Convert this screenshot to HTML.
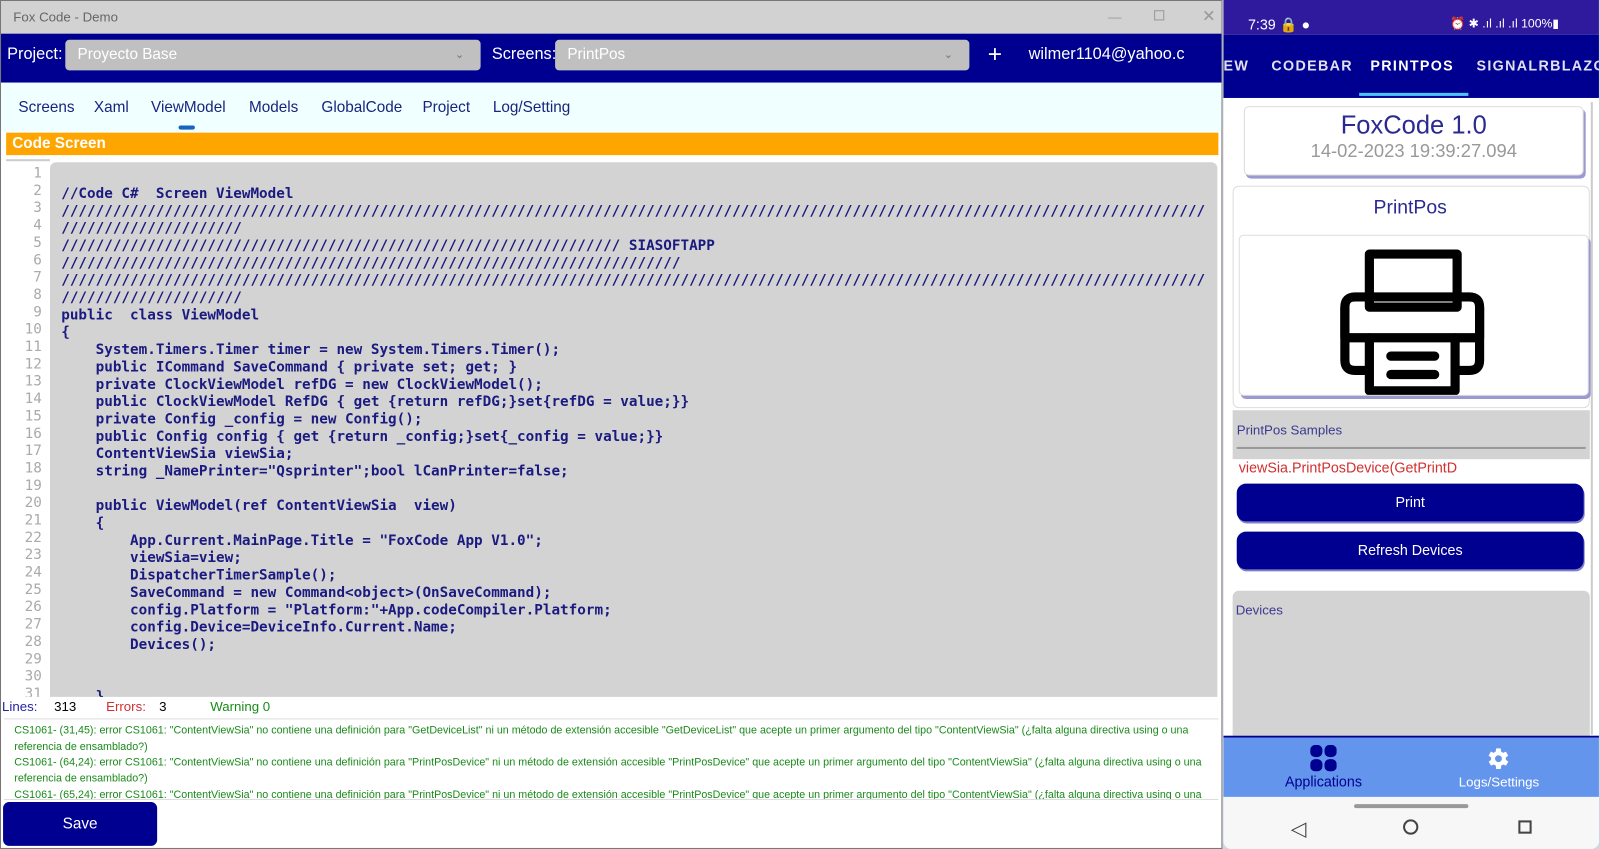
<!DOCTYPE html>
<html><head><meta charset="utf-8"><style>
*{box-sizing:border-box;margin:0;padding:0}
body{width:1600px;height:849px;overflow:hidden;background:#cfd6e0;font-family:"Liberation Sans","DejaVu Sans",sans-serif;position:relative}
#wrap{position:absolute;left:0;top:0;width:1568px;height:832px;transform:scale(1.0204);transform-origin:0 0}
.abs{position:absolute}
#win{left:0;top:0;width:1198px;height:832px;background:#fff;border:1px solid #777}
.title{left:0;top:0;width:1196px;height:32px;background:#d2d2d2;color:#666;font-size:13px;line-height:32px;padding-left:12px}
.nav{left:0;top:32px;width:1196px;height:48px;background:#000090;color:#fff;font-size:16px}
.sel{background:#c0c0c0;border-radius:4px;height:30px;top:6px;color:#fff;font-size:15px;line-height:30px;padding-left:12px}
.tabs{left:0;top:80px;width:1196px;height:48px;background:#f0ffff;font-size:15px;color:#1a237e}
.tabs span{position:absolute;top:16px}
.orange{left:5px;top:129px;width:1188px;height:22px;background:#ffa500;color:#fff;font-weight:bold;font-size:15px;line-height:22px;padding-left:6px}
.gut{left:5px;top:155px;width:43px;height:527px;border-top:2px solid #ccc;font-family:"DejaVu Sans Mono",monospace;font-size:14px;color:#aaa;text-align:right;padding-right:8px;line-height:17px;overflow:hidden;background:#fff}
.code{left:48px;top:158px;width:1144px;height:524px;background:#d3d3d3;border-radius:6px 6px 0 0;font-family:"DejaVu Sans Mono",monospace;font-size:14px;color:#1a1a80;line-height:17px;padding:6px 0 0 11px;white-space:pre;overflow:hidden;font-weight:bold}
.stat{top:684px;font-size:13px}
.err{left:3px;top:703px;width:1190px;height:80px;border-top:1px solid #ddd;border-bottom:1px solid #ddd;color:#1a8a1a;font-size:10.5px;line-height:15.7px;padding:4px 0 0 10px;overflow:hidden}
.save{left:2px;top:785px;width:151px;height:43px;background:#000090;border-radius:6px;color:#fff;font-size:15px;text-align:center;line-height:43px}
#ph{left:1199px;top:0;width:368px;height:832px;background:#fff;border-radius:0 0 8px 8px;overflow:hidden}
.card{background:#fff;border:1px solid #ddd;border-radius:5px;box-shadow:2px 3px 0 #9a9ad0}
.btn{left:13px;width:340px;height:37px;background:#000090;border-radius:9px;color:#fff;font-size:14px;text-align:center;line-height:37px;box-shadow:1px 2px 0 #8080c8}
</style></head><body><div id="wrap">
<div id="win" class="abs">
<div class="abs title">Fox Code - Demo<span class="abs" style="left:1085px;color:#999">—</span><span class="abs" style="left:1130px;top:9px;width:10px;height:10px;border:1px solid #999"></span><span class="abs" style="left:1177px;color:#999;font-size:16px">✕</span></div>
<div class="abs nav">
<span class="abs" style="left:6px;top:12px">Project:</span>
<div class="abs sel" style="left:63px;width:407px">Proyecto Base<span class="abs" style="right:16px;color:#777;font-size:11px">⌄</span></div>
<span class="abs" style="left:481px;top:12px">Screens:</span>
<div class="abs sel" style="left:543px;width:406px">PrintPos<span class="abs" style="right:16px;color:#777;font-size:11px">⌄</span></div>
<span class="abs" style="left:967px;top:7px;font-size:24px">+</span>
<span class="abs" style="left:1007px;top:12px">wilmer1104@yahoo.c</span>
</div>
<div class="abs tabs"><span style="left:17px">Screens</span><span style="left:91px">Xaml</span><span style="left:147px">ViewModel</span><span style="left:243px">Models</span><span style="left:314px">GlobalCode</span><span style="left:413px">Project</span><span style="left:482px">Log/Setting</span><div class="abs" style="left:174px;top:42px;width:16px;height:4px;border-radius:2px;background:#1565c0"></div></div>
<div class="abs orange">Code Screen</div>
<div class="abs gut" style="padding-top:4px">1<br>2<br>3<br>4<br>5<br>6<br>7<br>8<br>9<br>10<br>11<br>12<br>13<br>14<br>15<br>16<br>17<br>18<br>19<br>20<br>21<br>22<br>23<br>24<br>25<br>26<br>27<br>28<br>29<br>30<br>31</div>
<div class="abs code">
//Code C#  Screen ViewModel
/////////////////////////////////////////////////////////////////////////////////////////////////////////////////////////////////////
/////////////////////
///////////////////////////////////////////////////////////////// SIASOFTAPP
////////////////////////////////////////////////////////////////////////
/////////////////////////////////////////////////////////////////////////////////////////////////////////////////////////////////////
/////////////////////
public  class ViewModel
{
    System.Timers.Timer timer = new System.Timers.Timer();
    public ICommand SaveCommand { private set; get; }
    private ClockViewModel refDG = new ClockViewModel();
    public ClockViewModel RefDG { get {return refDG;}set{refDG = value;}}
    private Config _config = new Config();
    public Config config { get {return _config;}set{_config = value;}}
    ContentViewSia viewSia;
    string _NamePrinter="Qsprinter";bool lCanPrinter=false;

    public ViewModel(ref ContentViewSia  view)
    {
        App.Current.MainPage.Title = "FoxCode App V1.0";
        viewSia=view;
        DispatcherTimerSample();
        SaveCommand = new Command&lt;object&gt;(OnSaveCommand);
        config.Platform = "Platform:"+App.codeCompiler.Platform;
        config.Device=DeviceInfo.Current.Name;
        Devices();


    }
</div>
<span class="abs stat" style="left:1px;color:#2323a0">Lines:</span><span class="abs stat" style="left:52px">313</span>
<span class="abs stat" style="left:103px;color:#d03030">Errors:</span><span class="abs stat" style="left:155px">3</span>
<span class="abs stat" style="left:205px;color:#1a8a1a">Warning 0</span>
<div class="abs err">CS1061- (31,45): error CS1061: "ContentViewSia" no contiene una definición para "GetDeviceList" ni un método de extensión accesible "GetDeviceList" que acepte un primer argumento del tipo "ContentViewSia" (¿falta alguna directiva using o una referencia de ensamblado?)<br>CS1061- (64,24): error CS1061: "ContentViewSia" no contiene una definición para "PrintPosDevice" ni un método de extensión accesible "PrintPosDevice" que acepte un primer argumento del tipo "ContentViewSia" (¿falta alguna directiva using o una referencia de ensamblado?)<br>CS1061- (65,24): error CS1061: "ContentViewSia" no contiene una definición para "PrintPosDevice" ni un método de extensión accesible "PrintPosDevice" que acepte un primer argumento del tipo "ContentViewSia" (¿falta alguna directiva using o una referencia de ensamblado?)</div>
<div class="abs save">Save</div>
</div>
<div id="ph" class="abs">
<div class="abs" style="left:0;top:0;width:368px;height:34px;background:#2f1a9e;color:#fff;font-size:14px"><span class="abs" style="left:24px;top:16px">7:39 🔒 ●</span><span class="abs" style="left:222px;top:16px;font-size:12px">⏰ ✱ .ıl .ıl .ıl 100%▮</span></div>
<div class="abs" style="left:0;top:34px;width:368px;height:62px;background:#000090;color:#e0e0f0;font-size:14px;font-weight:bold;letter-spacing:1.3px;white-space:nowrap"><span class="abs" style="left:0;top:22px">EW</span><span class="abs" style="left:47px;top:22px">CODEBAR</span><span class="abs" style="left:144px;top:22px;color:#fff">PRINTPOS</span><span class="abs" style="left:248px;top:22px">SIGNALRBLAZOR</span><div class="abs" style="left:133px;top:57px;width:107px;height:3px;background:#4fc3f7"></div></div>
<div class="abs card" style="left:20px;top:104px;width:333px;height:68px;text-align:center"><div style="font-size:25px;color:#2a2a90;margin-top:4px">FoxCode 1.0</div><div style="font-size:18px;color:#999">14-02-2023 19:39:27.094</div></div>
<div class="abs" style="left:9px;top:182px;width:350px;height:218px;border:1px solid #ddd;border-radius:6px"></div>
<div class="abs" style="left:0;top:193px;width:366px;text-align:center;color:#2a2a90;font-size:19px">PrintPos</div>
<div class="abs card" style="left:15px;top:230px;width:343px;height:158px">
<svg class="abs" style="left:93px;top:10px" width="152" height="146" viewBox="0 0 152 146"><g fill="none" stroke="#000" stroke-width="9" stroke-linejoin="round"><rect x="34" y="8" width="86" height="52"/><path d="M34 90H10V60Q10 50 20 50H132Q142 50 142 60V90H118"/><path d="M10 60V112Q10 122 20 122H34M118 122H132Q142 122 142 112V60"/><rect x="34" y="90" width="84" height="52"/></g><g stroke="#000" stroke-width="9" stroke-linecap="round"><path d="M55 108H98M55 126H98"/></g></svg>
</div>
<div class="abs" style="left:9px;top:402px;width:350px;height:48px;background:#d3d3d3"><span class="abs" style="left:4px;top:12px;color:#3a3a90;font-size:13px">PrintPos Samples</span><div class="abs" style="left:4px;top:36px;width:342px;height:2px;background:#999"></div></div>
<div class="abs" style="left:15px;top:450px;color:#d03030;font-size:14px">viewSia.PrintPosDevice(GetPrintD</div>
<div class="abs btn" style="top:474px">Print</div>
<div class="abs btn" style="top:521px">Refresh Devices</div>
<div class="abs" style="left:9px;top:579px;width:350px;height:142px;background:#d3d3d3;border-radius:6px 6px 0 0"><span class="abs" style="left:3px;top:11px;color:#3a3a90;font-size:13px">Devices</span></div>
<div class="abs" style="left:360px;top:100px;width:2px;height:620px;background:#ccc"></div>
<div class="abs" style="left:0;top:721px;width:368px;height:2px;background:#000090"></div>
<div class="abs" style="left:0;top:723px;width:368px;height:58px;background:#6495ed">
<svg class="abs" style="left:85px;top:7px" width="26" height="26" viewBox="0 0 26 26" fill="#000090"><rect x="0" y="0" width="12" height="12" rx="5"/><rect x="14" y="0" width="12" height="12" rx="5"/><rect x="0" y="14" width="12" height="12" rx="5"/><rect x="14" y="14" width="12" height="12" rx="5"/></svg>
<span class="abs" style="left:48px;top:35px;width:100px;text-align:center;color:#000090;font-size:14px">Applications</span>
<svg class="abs" style="left:256px;top:7px" width="27" height="27" viewBox="0 0 24 24"><path fill="#fff" d="M19.4 13a7.5 7.5 0 000-2l2.1-1.6-2-3.5-2.5 1a7.4 7.4 0 00-1.7-1L15 3h-4l-.4 2.9a7.4 7.4 0 00-1.7 1l-2.5-1-2 3.5L6.6 11a7.5 7.5 0 000 2l-2.1 1.6 2 3.5 2.5-1a7.4 7.4 0 001.7 1L11 21h4l.4-2.9a7.4 7.4 0 001.7-1l2.5 1 2-3.5zM13 15a3 3 0 110-6 3 3 0 010 6z" transform="translate(-1 0)"/></svg>
<span class="abs" style="left:220px;top:36px;width:100px;text-align:center;color:#fff;font-size:13px">Logs/Settings</span>
</div>
<div class="abs" style="left:0;top:781px;width:368px;height:51px;background:#f7f7f7"></div>
<div class="abs" style="left:128px;top:788px;width:112px;height:4px;border-radius:2px;background:#999"></div>
<span class="abs" style="left:66px;top:800px;font-size:20px;color:#444">◁</span>
<span class="abs" style="left:176px;top:803px;width:15px;height:15px;border:2px solid #444;border-radius:50%"></span>
<span class="abs" style="left:289px;top:804px;width:13px;height:13px;border:2px solid #444"></span>
</div>
</div></body></html>
